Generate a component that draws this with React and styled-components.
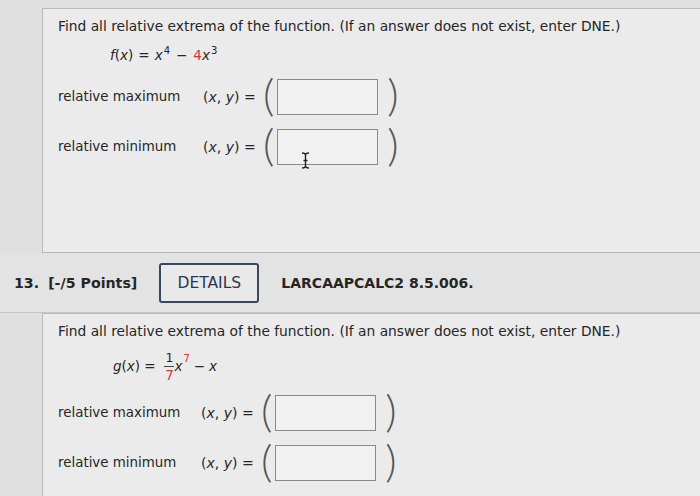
import React from "react";
import styled, { createGlobalStyle } from "styled-components";

const Global = createGlobalStyle`
  html, body {
    margin: 0;
    padding: 0;
    background: #dfdfdf;
    overflow: hidden;
  }
  body {
    font-family: "DejaVu Sans", Verdana, sans-serif;
    color: #262626;
  }
`;

const Page = styled.div`
  width: 700px;
  height: 496px;
  overflow: hidden;
  background: #e0e0e0;
  padding-top: 8px;
  box-sizing: border-box;
`;

const Body = styled.div`
  margin-left: 42px;
  background: #ebebeb;
  border: 1px solid #b9b9b9;
  border-right: none;
  padding: 8px 0 0 15px;
  height: ${(p) => p.h}px;
  box-sizing: border-box;
  ${(p) => p.open && "border-bottom: none;"}
`;

const Prompt = styled.div`
  font-size: 13.8px;
  line-height: 18px;
  white-space: nowrap;
`;

const Formula = styled.div`
  display: flex;
  align-items: center;
  margin-left: ${(p) => p.indent}px;
  margin-top: ${(p) => p.top}px;
  height: ${(p) => p.h}px;
  font-size: 13.5px;
  white-space: nowrap;
  i {
    font-style: italic;
  }
`;

const Op = styled.span`
  margin: 0 ${(p) => p.gap}px;
`;

const Sup = styled.span`
  font-size: 10px;
  align-self: flex-start;
  margin-top: ${(p) => p.top}px;
  margin-left: 1px;
  color: ${(p) => (p.red ? "#d2363b" : "inherit")};
`;

const Red = styled.span`
  color: #d2363b;
`;

const Frac = styled.span`
  display: inline-flex;
  flex-direction: column;
  align-items: center;
  margin: 0 0 0 5px;
  font-size: 12.5px;
  line-height: 14px;
  span:first-child {
    border-bottom: 1px solid #444;
    padding: 0 1px 1px;
  }
  span:last-child {
    padding-top: 1px;
    font-size: 13.5px;
  }
`;

const Row = styled.div`
  display: flex;
  align-items: center;
  margin-top: ${(p) => p.top}px;
  height: 37px;
  font-size: 13.4px;
`;

const Label = styled.span`
  width: ${(p) => p.w}px;
  white-space: nowrap;
`;

const Pair = styled.span`
  width: 60px;
  white-space: nowrap;
  font-size: 14px;
  i {
    font-style: italic;
  }
`;

const Paren = styled.span`
  font-family: Lato, "DejaVu Sans", sans-serif;
  font-size: 44px;
  font-weight: 300;
  line-height: 37px;
  color: #555;
  margin: ${(p) => p.m};
  position: relative;
  top: -2px;
`;

const Input = styled.div`
  width: 101px;
  height: 36px;
  box-sizing: border-box;
  border: 1.5px solid #8a8a8a;
  background: #f1f1f1;
  position: relative;
`;

const Caret = styled.svg`
  position: absolute;
  left: 23px;
  top: 22px;
  overflow: visible;
`;

const Header = styled.div`
  display: flex;
  align-items: center;
  height: 59px;
  padding-left: 14px;
  border-bottom: 1px solid #c5c5c5;
  background: #e3e3e3;
  font-weight: bold;
  font-size: 14.2px;
  white-space: nowrap;
`;

const Num = styled.span`
  margin-right: 9px;
`;

const Details = styled.button`
  margin: 0 22px 0 22px;
  width: 100px;
  height: 40px;
  border: 2px solid #3b4760;
  border-radius: 3px;
  background: #e9e9e9;
  font-family: "DejaVu Sans", Verdana, sans-serif;
  font-size: 15.5px;
  color: #2c3650;
  padding: 0;
`;

const Code = styled.span`
  font-size: 14px;
`;

const IBeam = () => (
  <Caret width="9" height="17" viewBox="0 0 9 17">
    <path
      d="M1 1 C3 1 4.5 1.5 4.5 3 L4.5 14 C4.5 15.5 3 16 1 16 M8 1 C6 1 4.5 1.5 4.5 3 M4.5 14 C4.5 15.5 6 16 8 16 M2.5 8.5 L6.5 8.5"
      fill="none"
      stroke="#222"
      strokeWidth="1.4"
    />
  </Caret>
);

const AnswerRow = ({ label, top, labelW, caret }) => (
  <Row top={top}>
    <Label w={labelW}>{label}</Label>
    <Pair>
      (<i>x</i>, <i>y</i>) =
    </Pair>
    <Paren m="0 3px 0 0">(</Paren>
    <Input>{caret && <IBeam />}</Input>
    <Paren m="0 0 0 9px">)</Paren>
  </Row>
);

export default function App() {
  return (
    <Page>
      <Global />
      <Body h={245}>
        <Prompt>Find all relative extrema of the function. (If an answer does not exist, enter DNE.)</Prompt>
        <Formula indent={52} top={9} h={22}>
          <i>f</i>(<i>x</i>)<Op gap={5}>=</Op>
          <i>x</i>
          <Sup top={1}>4</Sup>
          <Op gap={6}>−</Op>
          <Red>4</Red>
          <i>x</i>
          <Sup top={1}>3</Sup>
        </Formula>
        <AnswerRow label="relative maximum" labelW={145} top={12} />
        <AnswerRow label="relative minimum" labelW={145} top={13} caret />
      </Body>
      <Header>
        <Num>13.</Num>[-/5 Points]
        <Details>DETAILS</Details>
        <Code>LARCAAPCALC2 8.5.006.</Code>
      </Header>
      <Body h={200} open>
        <Prompt>Find all relative extrema of the function. (If an answer does not exist, enter DNE.)</Prompt>
        <Formula indent={55} top={8} h={36}>
          <i>g</i>(<i>x</i>)<Op gap={4}>=</Op>
          <Frac>
            <span>1</span>
            <Red>7</Red>
          </Frac>
          <i>x</i>
          <Sup red top={5}>7</Sup>
          <Op gap={4}>−</Op>
          <i>x</i>
        </Formula>
        <AnswerRow label="relative maximum" labelW={143} top={10} />
        <AnswerRow label="relative minimum" labelW={143} top={13} />
      </Body>
    </Page>
  );
}
